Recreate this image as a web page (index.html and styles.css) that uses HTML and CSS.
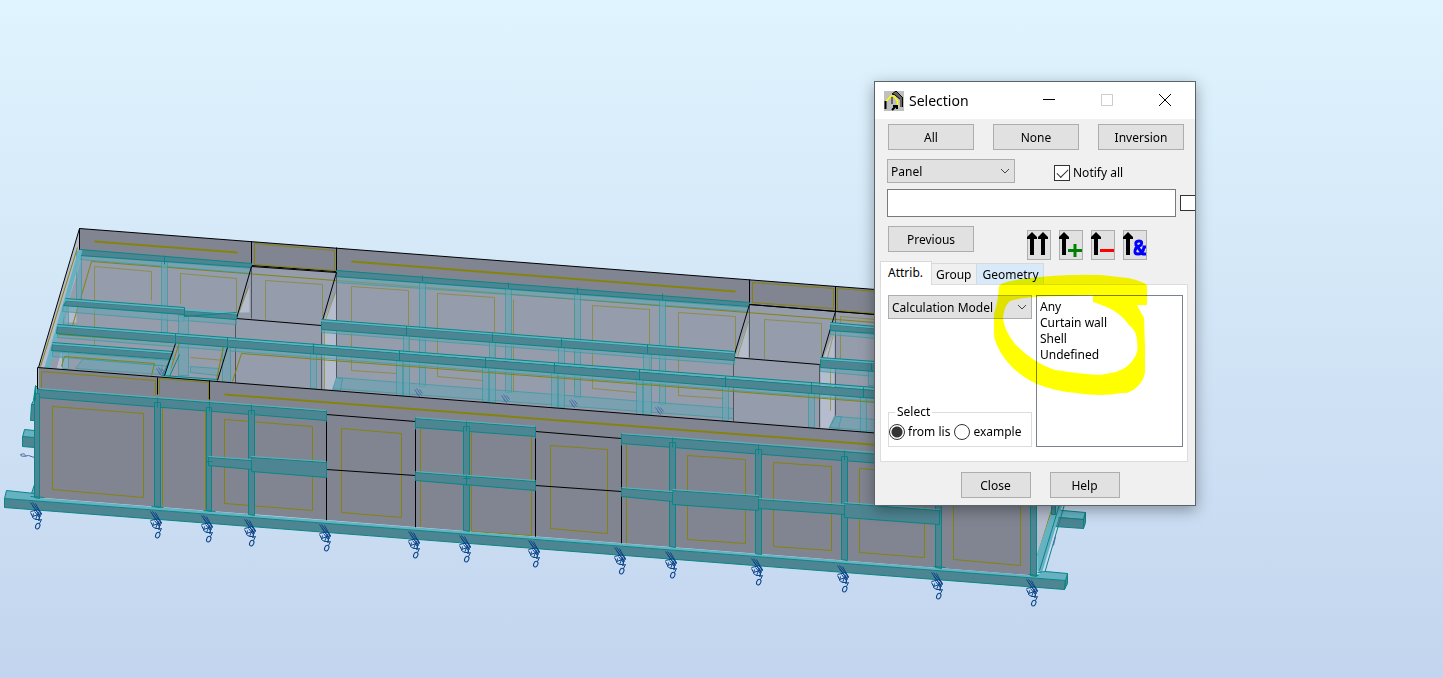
FILE: index.html
```html
<!DOCTYPE html>
<html lang="en">
<head>
<meta charset="utf-8">
<title>Selection</title>
<link rel="stylesheet" href="styles.css">
</head>
<body>
<main class="viewport">
<svg class="model" viewBox="-0.5 -0.5 1443 678" preserveAspectRatio="xMinYMin meet" role="img" aria-label="Structural model">
  <defs>
    <g id="support" class="support">
      <path d="M-7 1L3 15M-5 1L4 13M-5 4L2 14M-2 2L4 13M-7 10L1 8L4 12L-5 15L-7 11M-4 12L-5 16L-2 18L1 11L2 18L-2 18M-3 10L2 16M3 13L1 19L4 18L2 22"/>
      <ellipse cx="0.5" cy="24.500" rx="2" ry="3" transform="rotate(25 0 24)"/>
    </g>
    <path id="mark" class="mark" d="M-4 -3L1 4M-2 -4L3 3M1 -3L4 1M-2 1L1 4"/>
  </defs>

  <!-- interior and back wall -->
  <path class="inner" d="M79 250L875 313V433L38 367Z"/>
  <path class="pale" d="M79 229L80 262L47 368H38Z"/>
  <path class="pale" d="M68 306H76V322H64ZM61 350H68V369H56ZM78 268V250L70 290Z"/>
  <path class="wall edge" d="M79 228L875 289V314L749 304L336 271L251 265L79 250Z"/>
  <path class="yellow thick" d="M94 241L237 252M351 261L735 291"/>
  <path class="yellow" d="M254 243L334 250V270L254 264ZM752 282L833 288V308L752 302ZM875 291L837 288V310L875 313"/>
  <path class="edge" d="M251 241V265M336 247V272M749 279V304M835 286V311"/>
  <g class="yellow faint">
    <path d="M94 353V266L151 271V300M180 303V273L236 278V312M265 319V280L322 284V316M351 370V286L408 290V350M351 370L396 373M437 376V293L494 297V358M437 376L482 380M513 392V299M574 387V304M592 388V305L649 309V370M592 388L636 392M678 395V312L735 316V352M678 395L722 398M764 358V319L821 323V355M840 370V316L875 319M250 385V332L306 337V388M748 420V371L805 375V424M190 357L225 360"/>
  </g>
  <path class="yellow" d="M72 325L91 261L875 322"/>
  <g class="glass">
    <path d="M80 255L251 268V273L80 259ZM336 276L749 307V311L336 282Z"/>
    <path d="M161 260H167V332H161ZM419 280H425V386H419ZM505 287H511V392H505ZM574 292H580V397H574ZM659 299H665V404H659Z"/>
    <path d="M336 377L734 408V418L332 388ZM83 358L162 365L160 374L75 368ZM190 366L218 368V375L190 372ZM835 416L875 419V431L829 427Z"/>
    <path d="M76 251L81 252V300H76ZM63 307H68V325H63ZM62 350H68V368H62Z"/>
  </g>
  <path class="beam" d="M80 249L251 263V267L80 255Z"/><path class="beam" d="M336 270L749 302V306L336 276Z"/>
  <path class="teal" d="M164 255V264M422 275V281M508 282V288M577 287V293M662 293V300"/>

  <!-- recessed bays -->
  <path class="bay" d="M236 319L321 325V390L236 384Z"/><path class="bay" d="M733 357L819 364V428L733 422Z"/>
  <path class="pale" d="M336 290V379L332 389H323V320ZM249 286V312H239ZM748 320V357H735ZM834 330V414L828 428H820V364Z"/>
  <path class="grey" d="M251 266V318M336 272V378M235 319V383M321 325V389M749 304V357M733 357V421M835 311V415M819 364V427"/>
  <path class="yellow faint" d="M324 389V322L335 292M239 310L248 286M737 356L748 321M830 410V366M827 357L834 330"/>
  <path class="edge" d="M251 266L336 272L322 320M251 266L236 318L321 325M749 304L835 311L820 362M749 304L733 357L819 364M835 311L875 314"/>
  <g class="glass"><path d="M332 389L336 377L342 378L340 390ZM829 427L835 416L841 416L838 428Z"/></g>

  <!-- left rafter -->
  <path class="yellow" d="M77 247L40 366"/>
  <path class="light" d="M78 249L82 250L49 368L44 367Z"/>
  <path class="edge" d="M79 228L38 367"/>

  <!-- longitudinal beams, rear to front -->
  <g class="glass">
    <path d="M63 305L183 314V321L62 311ZM184 313L236 318V324L184 320ZM321 328L734 359V364L321 332ZM820 366L875 371V376L820 371ZM830 330L875 334V338L830 334Z"/>
    <path d="M178 315H188V375H178ZM403 333H409V396H403ZM489 339H495V402H489ZM558 344H564V407H558ZM643 351H651V414H643ZM868 368H875V385H868Z"/>
  </g>
  <path class="beam" d="M66 300L184 309V314L63 305ZM184 310L236 314V319L184 315ZM321 321L734 353V360L321 329ZM820 359L875 363V371L820 367ZM830 324L875 328V333L830 330Z"/>
  <path class="light" d="M65 298L184 307V309L64 300ZM184 308L236 312V314L184 310ZM321 319L734 351V353L321 321ZM820 357L875 361V363L820 359ZM830 322L875 326V328L830 324Z"/>
  <path class="teal" d="M65 298L184 307V316L236 312M321 319L734 351M820 357L875 361M830 322L875 326M406 326V335M492 333V341M561 338V346M647 344V353M871 363V370"/>
  <g class="glass">
    <path d="M57 331L875 396V401L57 337ZM52 351L170 360V366L52 356Z"/>
    <path d="M222 346H230V382L222 381ZM310 353H316V388H310ZM396 360H402V395H396ZM482 366H488V401H482ZM551 372H557V407H551ZM636 378H642V414H636ZM722 385H728V420H722ZM808 391H814V427H808ZM860 395H866V431H860Z"/>
  </g>
  <path class="yellow" d="M58 334L173 342M179 342L223 346L216 379M232 381L241 353L875 402M61 366L64 356L154 363L151 375M168 375L179 342"/>
  <path class="beam" d="M57 326L875 390V398L56 333ZM52 344L172 353V359L51 350Z"/>
  <path class="light" d="M58 324L875 387V389L57 326ZM53 342L173 351V353L52 344ZM173 353L169 376L162 375ZM162 375L217 379L216 381L162 377Z"/>
  <path class="teal" d="M57 324L875 387M52 342L173 351L162 375L217 379M179 354L169 376"/>
  <path class="edge" d="M175 343L164 375M227 347L217 380"/>
  <path class="teal" d="M175 333V342M227 337V347M313 343V354M399 350V361M485 357V368M554 362V373M639 369V380M725 376V387M811 382V393M863 387V397"/>
  <g>
    <use href="#mark" x="160" y="371"/><use href="#mark" x="418" y="392"/><use href="#mark" x="505" y="398"/><use href="#mark" x="573" y="403"/><use href="#mark" x="659" y="410"/>
  </g>

  <!-- right gable -->
  <path class="pale" d="M1036 500H1056L1037 570Z"/>
  <path class="yellow" d="M1053 503L1037 555"/>
  <path class="light outlined" d="M1051 509L1085 512L1083 519L1058 517Z"/><path class="beam" d="M1057 517L1083 519V528L1054 526ZM1085 512V522L1083 528V519Z"/>
  <path class="light" d="M1054 503L1062 504L1041 574L1037 570V552Z"/><path class="teal" d="M1064 504L1044 573M1059 504L1039 570"/>
  <path class="beam" d="M1051 500H1055V514H1051Z"/><path class="mark" d="M1055 536L1053 545"/>

  <!-- left gable -->
  <path class="light outlined" d="M35 385L38 388V404H31L33 400ZM24 429L34 430V438L22 437ZM34 484V497L30 496Z"/>
  <path class="beam" d="M31 404H35V420H30ZM22 436L34 437V447L22 446Z"/>
  <path class="mark" d="M34 457L28 455Q20 457 20 454Q25 452 25 456"/>

  <!-- front wall -->
  <path class="wall" d="M38 367L1035 445V575L38 497Z"/>
  <path class="edge" d="M37 389V367L1035 445M157 377V394M209 380V399"/>
  <path class="yellow" d="M41 387V371L155 380V395M159 394V378L208 382V399M52 406L143 413V497L52 489ZM162 406V505M205 410V509M224 419L312 426V510L224 503ZM341 428L401 433V517L341 512ZM420 428V526M463 430V530M471 531V432M471 531L531 535V437M550 445L607 449V533L550 528ZM626 444V543M669 445V546M687 455L745 459V543L687 539ZM773 462L831 466V550L773 546ZM859 468L924 473V557L859 552ZM953 475L1020 480V565L953 559Z"/>
  <path class="yellow thick" d="M224 394L1000 454"/>
  <path class="edge" d="M326 414L415 421M326 469L415 475M535 431L621 438M535 485L621 491M326 411V520M415 420V527M535 429V537M621 436V543"/>

  <path class="light" d="M6 490L34 493V497L1033 575L1045 571L1067 573L1065 580L4 498Z"/>
  <path class="teal" d="M4 498L6 490L34 493M1037 572L1045 571L1067 573"/>
  <path class="beam" d="M4 498L1065 580L1064 589L4 507ZM1067 573V583L1064 589L1065 580Z"/>
  <path class="beam" d="M37 389L326 411V420L37 397ZM415 418L535 427V436L415 427ZM621 434L1036 466V475L621 443Z"/>
  <path class="beam" d="M34 393H39V498L34 497ZM154 402H160V507L154 506ZM206 407H211V511L206 510ZM248 410H254V515L248 514ZM463 426H469V531L463 530ZM669 442H675V547L669 546ZM755 449H761V554L755 553ZM841 456H847V560L841 559ZM935 464H941V568L935 567ZM1030 470H1036V576L1030 575Z"/>
  <path class="beam" d="M208 457L251 460V469L208 465ZM251 457L326 462V477L251 471ZM415 472L535 481V490L415 480ZM621 488L672 492V501L621 496ZM672 490L758 496V510L672 504ZM758 499L844 505V514L758 508ZM844 503L939 510V524L844 517Z"/>
  <path class="cyan" d="M40 388L326 410M415 417L535 426M621 433L875 452M208 456L251 459M251 456L326 461M415 471L535 480M621 487L672 491M672 489L758 495M758 498L844 504M844 502L939 509"/>
  <path class="teal" d="M157 397V407M209 401V411M251 404V414M466 421V431M466 475V485M672 437V447M758 444V454M844 450V460M35 386V400M326 410V421M415 417V429M535 426V438M621 433V445M206 461H212M463 478H470M151 506L163 507M203 510L215 511M30 496L44 497M933 566L945 567M1028 574L1038 575"/>
  <g>
    <use href="#support" x="37" y="501"/><use href="#support" x="157" y="510"/><use href="#support" x="208" y="514"/><use href="#support" x="251" y="518"/><use href="#support" x="326" y="523"/><use href="#support" x="415" y="530"/><use href="#support" x="466" y="534"/><use href="#support" x="535" y="539"/><use href="#support" x="621" y="546"/><use href="#support" x="672" y="550"/><use href="#support" x="758" y="557"/><use href="#support" x="844" y="564"/><use href="#support" x="938" y="571"/><use href="#support" x="1033" y="578"/>
  </g>
</svg>

<section class="dialog" role="dialog" aria-labelledby="dialog-title">
  <header class="titlebar">
    <svg class="app-icon" viewBox="0 0 20 20" aria-hidden="true">
      <rect width="20" height="20" fill="#c0c0c0"/>
      <path d="M8 3L12 0L19 7L17 9L11 4Z" fill="#666" stroke="#000"/>
      <path d="M8 5V13M17 8V16" stroke="#666" stroke-width="2"/><path d="M18.500 7V16" stroke="#000"/>
      <path d="M1.500 11L7 5H10L13.500 10V17" fill="none" stroke="#ff0" stroke-width="1.500"/>
      <path d="M1.500 10V18M8 19L12 15M9 15H13V18" fill="none" stroke="#000" stroke-width="2"/>
    </svg>
    <h1 class="title" id="dialog-title">Selection</h1>
    <div class="window-buttons">
      <button class="window-button" type="button" aria-label="Minimize"><svg viewBox="0 0 14 14"><path d="M1 5.500H13"/></svg></button>
      <button class="window-button" type="button" aria-label="Maximize" disabled><svg viewBox="0 0 14 14"><path d="M1.500 0.500H12.500V11.500H1.500Z"/></svg></button>
      <button class="window-button" type="button" aria-label="Close window"><svg viewBox="0 0 14 14"><path d="M1 0L13 12M13 0L1 12"/></svg></button>
    </div>
  </header>
  <div class="body">
    <div class="row spread">
      <button class="button" type="button">All</button>
      <button class="button" type="button">None</button>
      <button class="button" type="button">Inversion</button>
    </div>
    <div class="row filter">
      <span class="dropdown"><select class="select" aria-label="Object type"><option>Panel</option></select><svg class="chevron" viewBox="0 0 10 6"><path d="M1 1L5 5L9 1"/></svg></span>
      <label class="check"><input class="tick" type="checkbox" checked> Notify all</label>
    </div>
    <div class="row entry">
      <input class="text" type="text" aria-label="Selected objects">
      <input class="tick" type="checkbox" aria-label="Attributes">
    </div>
    <div class="row modes">
      <button class="button" type="button">Previous</button>
      <div class="tools">
        <button class="tool" type="button" aria-label="Select"><svg viewBox="0 0 24 30"><path class="arrow" d="M0 7L5 2L10 7V9H7V25H3V9H0ZM11 7L16 2L21 7V9H18V25H14V9H11Z"/></svg></button>
        <button class="tool" type="button" aria-label="Add to selection"><svg viewBox="0 0 24 30"><path class="arrow" d="M0 7L5 2L10 7V9H7V25H3V9H0Z"/><path d="M9 20.500H23M16 14V27" stroke="#008000" stroke-width="3"/></svg></button>
        <button class="tool" type="button" aria-label="Remove from selection"><svg viewBox="0 0 24 30"><path class="arrow" d="M0 7L5 2L10 7V9H7V25H3V9H0Z"/><path d="M9 20.500H23" stroke="#f00" stroke-width="3"/></svg></button>
        <button class="tool" type="button" aria-label="Intersect selection"><svg viewBox="0 0 24 30"><path class="arrow" d="M0 7L5 2L10 7V9H7V25H3V9H0Z"/><path d="M23 24H20L13 15Q12 11 16 11Q20 11 18 15L13 18Q10 24 15 24Q20 24 21 17H23" fill="none" stroke="#00f" stroke-width="3"/></svg></button>
      </div>
    </div>
    <div class="tabs" role="tablist">
      <button class="tab active" type="button" role="tab" aria-selected="true">Attrib.</button>
      <button class="tab" type="button" role="tab" aria-selected="false">Group</button>
      <button class="tab hover" type="button" role="tab" aria-selected="false">Geometry</button>
    </div>
    <div class="sheet" role="tabpanel">
      <div class="criteria">
        <span class="dropdown wide"><select class="select" aria-label="Attribute"><option>Calculation Model</option></select><svg class="chevron" viewBox="0 0 10 6"><path d="M1 1L5 5L9 1"/></svg></span>
        <fieldset class="group">
          <legend class="legend">Select</legend>
          <label class="choice"><input class="radio" type="radio" name="source" checked>from lis</label>
          <label class="choice"><input class="radio" type="radio" name="source">example</label>
        </fieldset>
      </div>
      <select class="list" size="9" aria-label="Calculation model values">
        <option>Any</option><option>Curtain wall</option><option>Shell</option><option>Undefined</option>
      </select>
    </div>
    <footer class="actions">
      <button class="button small" type="button">Close</button>
      <button class="button small" type="button">Help</button>
    </footer>
  </div>
  <svg class="marker" viewBox="990 270 160 130" aria-hidden="true">
    <path d="M1147 285V305H1137L1144 318L1145 346V372Q1144 380 1138 386Q1130 394 1122 393Q1100 397 1076 393Q1054 391 1037 384Q1013 373 1001 353Q993 340 994 329V314Q998 302 999 286Q1002 281 1024 279Q1060 274 1101 275L1128 278Q1142 281 1147 285ZM1067 296Q1025 296 1010 301Q1004 306 1003 318Q1004 330 1015 344Q1033 363 1055 370Q1080 374 1100 375L1116 372Q1130 367 1134 358Q1139 352 1137 341Q1137 331 1129 325Q1122 315 1111 309Q1100 304 1093 302V295Z" fill="#ff0" fill-rule="evenodd"/>
  </svg>
</section>
</main>
</body>
</html>
```
FILE: styles.css
```css
* { box-sizing: border-box; }
body { margin: 0; font-family: "Noto Sans", sans-serif; font-size: 12px; line-height: 16px; color: #000; }
button, input, select { font: inherit; color: inherit; margin: 0; }

.viewport { position: relative; min-height: 100vh; overflow: hidden; background: linear-gradient(#dff4fe, #c3d5ee); }
.model { display: block; width: 100%; }

.model path { stroke-width: 1; fill: none; }
.model .wall { fill: #808591; }
.model .inner, .model .bay { fill: #959cab; }
.model .pale { fill: #b4bccd; }
.model .edge { stroke: #000; }
.model .grey { stroke: #50545e; }
.model .teal { stroke: #088686; }
.model .cyan { stroke: #5fb0bd; }
.model .yellow, .model .yellow path { stroke: #86830c; }
.model .thick { stroke-width: 2; }
.model .faint { opacity: 0.6; }
.model .beam { fill: #4e8592; stroke: #088686; }
.model .light { fill: #66b2c3; }
.model .outlined { stroke: #088686; }
.model .glass path { fill: #6ba3b4; fill-opacity: 0.6; stroke: #2a9aa0; stroke-opacity: 0.6; }
.model .support path, .support ellipse { fill: none; stroke: #0a4489; stroke-width: 1; }
.model .mark { stroke: #4a6ca8; }

.dialog { position: absolute; left: 874px; top: 81px; width: 322px; border: 1px solid #5a6468; background: #f0f0f0; box-shadow: 0 4px 14px rgba(0, 0, 0, 0.35); }
.titlebar { display: flex; align-items: center; height: 37px; padding-left: 9px; background: #fff; }
.app-icon { width: 20px; height: 20px; }
.title { margin: 0 auto 0 5px; font-size: 14px; font-weight: 400; line-height: 20px; }
.window-buttons { display: flex; padding-right: 1px; }
.window-button { display: flex; justify-content: center; align-items: center; width: 58px; height: 36px; padding: 0; border: 0; background: none; }
.window-button svg { width: 14px; height: 14px; fill: none; stroke: #000; stroke-width: 1; overflow: visible; }
.window-button:disabled svg { stroke: #ccc; }

.body { padding: 5px 7px 7px 5px; overflow: hidden; }
.row { display: flex; padding: 0 4px 0 8px; }
.spread { justify-content: space-between; }
.button { width: 86px; height: 26px; padding: 2px 0 0; border: 1px solid #adadad; background: #e1e1e1; }
.small { width: 70px; }

.filter { margin-top: 9px; padding-left: 7px; gap: 39px; }
.dropdown { position: relative; display: flex; width: 128px; height: 24px; }
.wide { width: 144px; }
.select { appearance: none; width: 100%; padding: 2px 3px 0; border: 1px solid #adadad; border-radius: 0; background: #e1e1e1; }
.chevron { position: absolute; right: 5px; top: 9px; width: 10px; height: 6px; fill: none; stroke: #444; pointer-events: none; }
.check { display: flex; align-items: center; gap: 3px; padding-top: 4px; }
.tick { appearance: none; flex: none; display: grid; place-content: center; width: 16px; height: 16px; border: 1px solid #333; background: #fff; }
.tick:checked::before { content: ""; width: 10px; height: 5px; margin-bottom: 3px; border: solid #333; border-width: 0 0 1px 1px; transform: rotate(-45deg); }

.entry { align-items: center; gap: 4px; margin-top: 6px; padding: 0 0 0 7px; }
.text { flex: none; width: 289px; height: 28px; padding: 0 4px; border: 1px solid #7a7a7a; background: #fff; }

.modes { margin-top: 9px; justify-content: space-between; }
.modes .button { flex: none; }
.tools { display: flex; gap: 8px; padding: 4px 37px 0 0; }
.tool { width: 24px; height: 30px; padding: 0; border: 1px solid #adadad; background: #e1e1e1; }
.tool svg { display: block; width: 24px; height: 30px; margin: -1px; overflow: visible; }
.arrow { fill: #000; }

.tabs { display: flex; align-items: flex-end; margin-top: 1px; }
.tab { height: 21px; padding: 1px 4px 0; border: 1px solid #d9d9d9; border-left: 0; border-bottom: 0; background: #f0f0f0; }
.active { z-index: 1; height: 24px; margin-bottom: -1px; padding: 0 8px 2px 7px; border-left: 1px solid #d9d9d9; background: #fff; }
.hover { padding: 1px 4px 0 6px; background: #d8eaf9; }
.sheet { display: flex; justify-content: space-between; padding: 10px 4px 14px 7px; border: 1px solid #dcdcdc; background: #fff; }
.criteria { display: flex; flex-direction: column; justify-content: space-between; }
.group { display: flex; gap: 4px; width: 144px; height: 43px; margin: 0; padding: 4px 0 0; border: 1px solid #dcdcdc; }
.legend { margin-left: 6px; padding: 0 2px; }
.choice { display: flex; align-items: center; gap: 3px; height: 16px; white-space: nowrap; }
.radio { appearance: none; width: 16px; height: 16px; border: 1px solid #333; border-radius: 50%; background: #fff; }
.radio:checked { background: radial-gradient(circle, #333 5px, #fff 6px); }
.list { appearance: none; width: 147px; height: 152px; padding: 2px 0; border: 1px solid #7a828c; border-radius: 0; background: #fff; overflow: hidden; }
.list option { height: 16px; min-height: 16px; padding: 0 3px; line-height: 16px; }
.actions { display: flex; justify-content: center; gap: 19px; margin-top: 10px; padding-left: 12px; }
.marker { position: absolute; left: 115px; top: 188px; width: 160px; height: 130px; mix-blend-mode: multiply; pointer-events: none; }
```
